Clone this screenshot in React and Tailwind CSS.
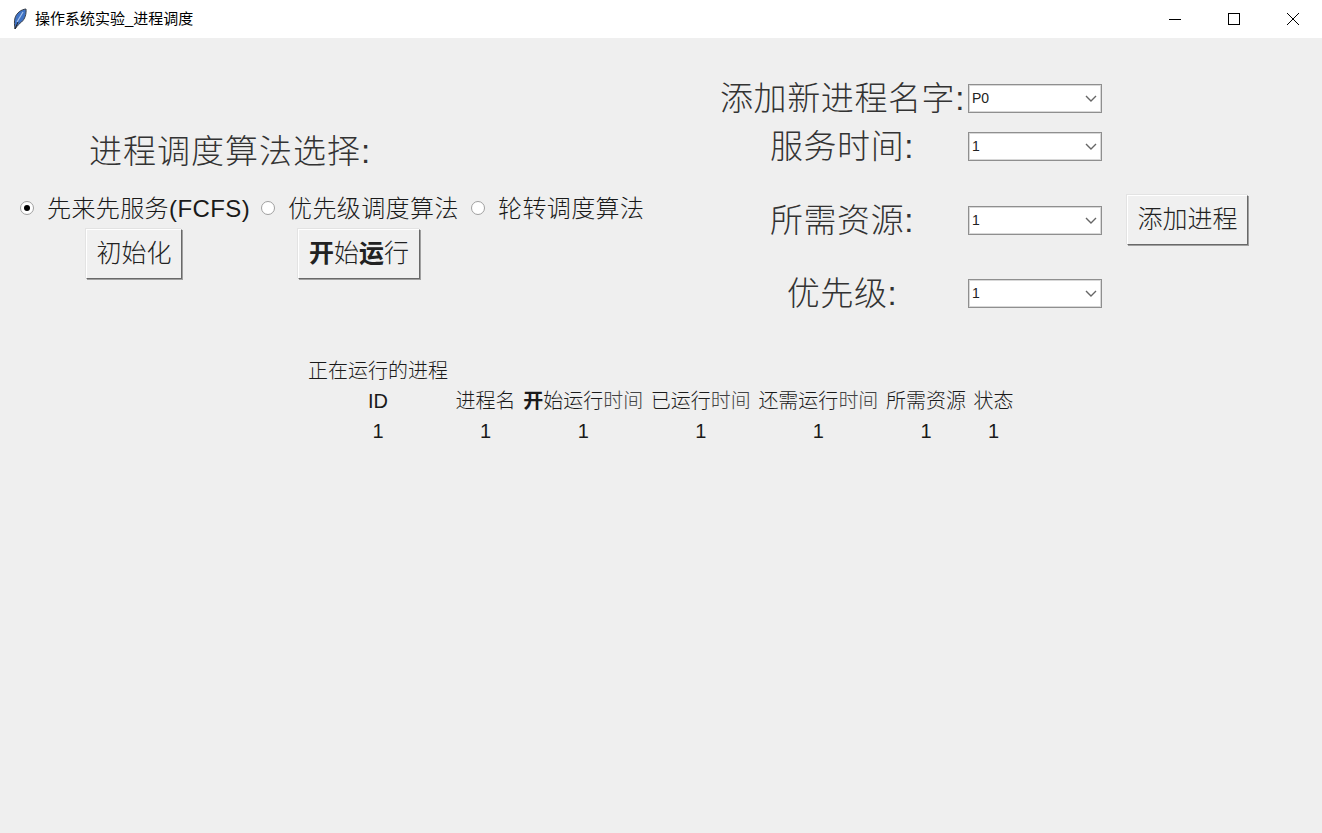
import React from "react";

const cjk = "font-['Liberation_Sans','Noto_Sans_CJK_SC',sans-serif]";

function Feather() {
  return (
    <svg width="14" height="22" viewBox="0 0 14 22">
      <path d="M2 21 C1.5 17 1 14 2 10 C3.5 5 8 1.5 13 1 C13.5 6 12 11 8.5 14 C6.5 15.5 4.5 17.5 2 21 Z" fill="#3f72c4" stroke="#3a3f47" strokeWidth="1" />
      <path d="M4 14 L10 4" stroke="#a9c4ea" strokeWidth="1.2" fill="none" />
      <path d="M2 21 L5 14" stroke="#22262c" strokeWidth="1" fill="none" />
    </svg>
  );
}

function WindowButton({ children }) {
  return <div className="flex h-full w-[58.67px] items-center justify-center">{children}</div>;
}

function TitleBar() {
  return (
    <div className="flex h-[38px] items-center bg-white pl-[13px]">
      <Feather />
      <span className="ml-2 text-[15px] text-black">操作系统实验_进程调度</span>
      <div className="ml-auto flex h-full">
        <WindowButton>
          <svg width="12" height="12" viewBox="0 0 12 12"><path d="M0 6.5H12" stroke="#000" strokeWidth="1" /></svg>
        </WindowButton>
        <WindowButton>
          <svg width="12" height="12" viewBox="0 0 12 12"><rect x="0.5" y="0.5" width="11" height="11" fill="none" stroke="#000" strokeWidth="1" /></svg>
        </WindowButton>
        <WindowButton>
          <svg width="12" height="12" viewBox="0 0 12 12"><path d="M0 0L12 12M12 0L0 12" stroke="#000" strokeWidth="1" /></svg>
        </WindowButton>
      </div>
    </div>
  );
}

function Radio({ checked, label }) {
  return (
    <div className="flex items-center gap-[13px] text-[24px] leading-none text-[#1a1a1a]">
      <span className="flex h-[14px] w-[14px] items-center justify-center rounded-full border border-[#a0a0a0] bg-white">
        {checked && <span className="h-[6px] w-[6px] rounded-full bg-black" />}
      </span>
      <span className="translate-y-px whitespace-nowrap font-light tracking-[0.4px]">{label}</span>
    </div>
  );
}

function RaisedButton({ children, className = "" }) {
  return (
    <div className={`flex h-[50px] items-center justify-center whitespace-nowrap border border-t-white border-l-white border-r-[#696969] border-b-[#696969] bg-[#f0f0f0] text-[25px] font-light text-[#222] shadow-[1px_1px_0_#a0a0a0,-1px_-1px_0_#e3e3e3] ${className}`}>
      {children}
    </div>
  );
}

function Combo({ value }) {
  return (
    <div className="flex h-[29px] w-[134px] items-center justify-between border border-[#8f8f8f] bg-white pl-[3px] pr-[4px] text-[14px] text-[#222] shadow-[inset_0_0_0_1px_#d8d8d8]">
      <span>{value}</span>
      <svg width="12" height="7" viewBox="0 0 12 7">
        <path d="M1 1L6 6L11 1" fill="none" stroke="#666" strokeWidth="1.4" />
      </svg>
    </div>
  );
}

function FormLabel({ children }) {
  return (
    <div className="text-center text-[33px] font-light leading-none tracking-[0.6px] whitespace-nowrap text-[#333]">{children}</div>
  );
}

function AlgorithmPanel() {
  return (
    <div className="w-[720px] pl-5 pt-[87px]">
      <div className="ml-[69px] h-[50px] translate-y-[2px] text-[33px] font-light leading-[50px] tracking-[1px] whitespace-nowrap text-[#333]">
        进程调度算法选择:
      </div>
      <div className="mt-[15px] grid grid-cols-[230px_196px_auto] gap-x-[11px]">
        <div className="flex h-[36px] items-center"><Radio checked label="先来先服务(FCFS)" /></div>
        <div className="flex h-[36px] items-center"><Radio label="优先级调度算法" /></div>
        <div className="flex h-[36px] items-center pl-[3px]"><Radio label="轮转调度算法" /></div>
        <div className="mt-[3px] flex justify-center pr-[2px]">
          <RaisedButton className="w-[96px]">初始化</RaisedButton>
        </div>
        <div className="mt-[3px] flex justify-center">
          <RaisedButton className="w-[122px]"><b className="font-bold">开</b>始<b className="font-bold">运</b>行</RaisedButton>
        </div>
      </div>
    </div>
  );
}

function AddProcessPanel() {
  return (
    <div className="grid grid-cols-[244px_134px_121px] grid-rows-[48px_48px_100px_46px] items-center gap-x-[4px] pt-[36px]">
      <FormLabel>添加新进程名字:</FormLabel>
      <Combo value="P0" />
      <div />
      <FormLabel>服务时间:</FormLabel>
      <Combo value="1" />
      <div />
      <FormLabel>所需资源:</FormLabel>
      <Combo value="1" />
      <RaisedButton className="ml-[21px] w-[121px]">添加进程</RaisedButton>
      <FormLabel>优先级:</FormLabel>
      <Combo value="1" />
      <div />
    </div>
  );
}

const start = <><b className="font-bold">开</b>始运行<span className="text-[#444]">时间</span></>;
const columns = [
  ["ID", "1"],
  ["进程名", "1"],
  [start, "1"],
  [<>已运行<span className="text-[#444]">时间</span></>, "1"],
  [<>还需运行<span className="text-[#444]">时间</span></>, "1"],
  ["所需资源", "1"],
  ["状态", "1"],
];

function RunningTable() {
  return (
    <div className="ml-[308px] mt-[40px] text-[20px] text-[#1a1a1a]">
      <div className="h-[30px] font-light leading-[30px]">正在运行的进程</div>
      <div className="grid w-max grid-cols-[140px_60px_120px_100px_120px_80px_40px] gap-x-[7.6px] text-center">
        {columns.map(([head], i) => (
          <div key={i} className="h-[30px] whitespace-nowrap font-light leading-[31px]">{head}</div>
        ))}
        {columns.map(([, value], i) => (
          <div key={i} className="h-[30px] leading-[30px]">{value}</div>
        ))}
      </div>
    </div>
  );
}

export default function App() {
  return (
    <div className={`flex h-[833px] flex-col overflow-hidden bg-[#efefef] ${cjk}`}>
      <TitleBar />
      <div className="flex">
        <AlgorithmPanel />
        <AddProcessPanel />
      </div>
      <RunningTable />
    </div>
  );
}
